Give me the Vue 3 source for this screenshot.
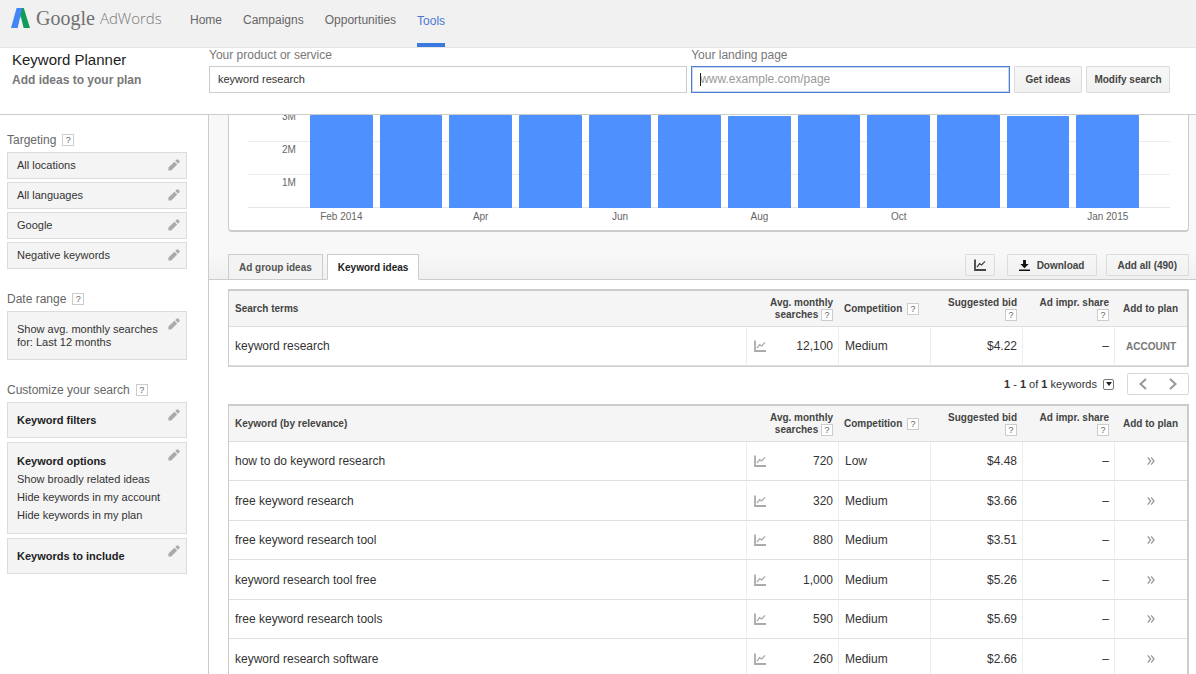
<script setup>
import { ref } from 'vue'

const nav = ['Home', 'Campaigns', 'Opportunities', 'Tools']
const product = ref('keyword research')
const landing = ref('')

const targeting = ['All locations', 'All languages', 'Google', 'Negative keywords']

const axis = ['3M', '2M', '1M']
const months = [
  { label: 'Feb 2014', value: 100 },
  { label: '', value: 100 },
  { label: 'Apr', value: 100 },
  { label: '', value: 100 },
  { label: 'Jun', value: 100 },
  { label: '', value: 100 },
  { label: 'Aug', value: 99 },
  { label: '', value: 100 },
  { label: 'Oct', value: 100 },
  { label: '', value: 100 },
  { label: '', value: 99 },
  { label: 'Jan 2015', value: 100 },
]

const tables = [
  {
    title: 'Search terms',
    rows: [{ term: 'keyword research', searches: '12,100', competition: 'Medium', bid: '$4.22', account: true }],
  },
  {
    title: 'Keyword (by relevance)',
    rows: [
      { term: 'how to do keyword research', searches: '720', competition: 'Low', bid: '$4.48' },
      { term: 'free keyword research', searches: '320', competition: 'Medium', bid: '$3.66' },
      { term: 'free keyword research tool', searches: '880', competition: 'Medium', bid: '$3.51' },
      { term: 'keyword research tool free', searches: '1,000', competition: 'Medium', bid: '$5.26' },
      { term: 'free keyword research tools', searches: '590', competition: 'Medium', bid: '$5.69' },
      { term: 'keyword research software', searches: '260', competition: 'Medium', bid: '$2.66' },
    ],
  },
]
</script>

<template>
  <div class="page">
    <svg class="defs" aria-hidden="true">
      <symbol id="pencil" viewBox="0 0 12 12">
        <path d="M0.4 11.6 V8.6 L6.4 2.8 L9.2 5.6 L3.2 11.6 Z M7.3 2 L8.8 0.6 Q9.5 0 10.2 0.6 L11.4 1.8 Q12 2.5 11.4 3.2 L10 4.7 Z" />
      </symbol>
      <symbol id="trend" viewBox="0 0 12 12">
        <path d="M1 0.5 V11 H12" fill="none" stroke="currentColor" stroke-width="1.8" />
        <path d="M3 8.2 L5.6 4.6 L7.6 6 L11 2.4" fill="none" stroke="currentColor" stroke-width="1.3" />
      </symbol>
    </svg>

    <header class="topbar">
      <a class="logo" href="#">
        <svg class="mark" viewBox="0 0 19 20">
          <path d="M7 0 H12.8 L19 20 H12.2 L8 6 Z" fill="#109d58" />
          <path d="M5.6 0 H11 L9.6 8 L6.8 20 H0 Z" fill="#4285f4" />
          <path d="M9.6 8 L12.6 20 H6.8 Z" fill="#f1f1f1" />
        </svg>
        <span class="brand">Google</span>
        <span class="product">AdWords</span>
      </a>
      <nav class="nav">
        <a v-for="n in nav" :key="n" href="#" :class="{ current: n === 'Tools' }">{{ n }}</a>
      </nav>
    </header>

    <section class="planner">
      <div class="titles">
        <h1>Keyword Planner</h1>
        <p>Add ideas to your plan</p>
      </div>
      <form class="search" @submit.prevent>
        <div class="field wide">
          <label for="product">Your product or service</label>
          <input id="product" v-model="product" type="text" />
        </div>
        <div class="field">
          <label for="landing">Your landing page</label>
          <div class="focusbox">
            <input id="landing" v-model="landing" class="focused" type="text" placeholder="www.example.com/page" />
            <span class="caret"></span>
          </div>
        </div>
        <button type="submit" class="btn tall">Get ideas</button>
        <button type="button" class="btn tall modify">Modify search</button>
      </form>
    </section>

    <div class="body">
      <aside class="side">
        <h2>Targeting <button type="button" class="help">?</button></h2>
        <button v-for="t in targeting" :key="t" type="button" class="card slim">
          <span>{{ t }}</span>
          <svg class="pencil"><use href="#pencil" /></svg>
        </button>

        <h2>Date range <button type="button" class="help">?</button></h2>
        <button type="button" class="card range">
          <span>Show avg. monthly searches for: Last 12 months</span>
          <svg class="pencil"><use href="#pencil" /></svg>
        </button>

        <h2>Customize your search <button type="button" class="help">?</button></h2>
        <button type="button" class="card">
          <strong>Keyword filters</strong>
          <svg class="pencil"><use href="#pencil" /></svg>
        </button>
        <button type="button" class="card">
          <span class="lines">
            <strong>Keyword options</strong>
            <span>Show broadly related ideas</span>
            <span>Hide keywords in my account</span>
            <span>Hide keywords in my plan</span>
          </span>
          <svg class="pencil"><use href="#pencil" /></svg>
        </button>
        <button type="button" class="card">
          <strong>Keywords to include</strong>
          <svg class="pencil"><use href="#pencil" /></svg>
        </button>
      </aside>

      <main class="main">
        <div class="upper">
          <div class="chart">
            <div class="plot">
              <div class="grid">
                <div v-for="a in axis" :key="a" class="band"><span>{{ a }}</span></div>
              </div>
              <div class="bars">
                <div v-for="(m, i) in months" :key="i" class="bar" :style="{ height: m.value + '%' }"></div>
              </div>
            </div>
            <div class="months">
              <span v-for="(m, i) in months" :key="i">{{ m.label }}</span>
            </div>
          </div>
          <div class="tools">
            <div class="tabs">
              <button type="button" class="tab">Ad group ideas</button>
              <button type="button" class="tab active">Keyword ideas</button>
            </div>
            <div class="actions">
              <button type="button" class="btn square" aria-label="Chart">
                <svg class="trend"><use href="#trend" /></svg>
              </button>
              <button type="button" class="btn download">
                <svg class="down" viewBox="0 0 10 10">
                  <path d="M3.7 0 H6.3 V3.6 H8.8 L5 7.6 L1.2 3.6 H3.7 Z M0 8.7 H10 V10 H0 Z" />
                </svg>
                Download
              </button>
              <button type="button" class="btn">Add all (490)</button>
            </div>
          </div>
        </div>

        <div class="results">
          <template v-for="(t, ti) in tables" :key="t.title">
            <table class="ideas">
              <colgroup>
                <col />
                <col class="c" />
                <col class="c" />
                <col class="c" />
                <col class="c" />
                <col class="last" />
              </colgroup>
              <thead>
                <tr>
                  <th class="term">{{ t.title }}</th>
                  <th class="num">Avg. monthly<br />searches <button type="button" class="help">?</button></th>
                  <th>Competition <button type="button" class="help gap">?</button></th>
                  <th class="num">Suggested bid<br /><button type="button" class="help">?</button></th>
                  <th class="num">Ad impr. share<br /><button type="button" class="help">?</button></th>
                  <th class="plan">Add to plan</th>
                </tr>
              </thead>
              <tbody>
                <tr v-for="r in t.rows" :key="r.term">
                  <td class="term">{{ r.term }}</td>
                  <td>
                    <div class="volume">
                      <svg class="trend"><use href="#trend" /></svg>
                      <span>{{ r.searches }}</span>
                    </div>
                  </td>
                  <td>{{ r.competition }}</td>
                  <td class="num">{{ r.bid }}</td>
                  <td class="num">–</td>
                  <td class="plan">
                    <span v-if="r.account" class="account">ACCOUNT</span>
                    <button v-else type="button" class="add" aria-label="Add to plan">
                      <svg viewBox="0 0 8 8">
                        <path d="M0.8 0.4 L3.6 4 L0.8 7.6 M4.2 0.4 L7 4 L4.2 7.6" />
                      </svg>
                    </button>
                  </td>
                </tr>
              </tbody>
            </table>
            <div v-if="ti === 0" class="pager">
              <span><b>1</b> - <b>1</b> of <b>1</b> keywords</span>
              <button type="button" class="drop" aria-label="Rows">
                <svg viewBox="0 0 6 4"><path d="M0 0 H6 L3 4 Z" /></svg>
              </button>
              <div class="arrows">
                <button type="button" aria-label="Previous">
                  <svg viewBox="0 0 8 12"><path d="M7 1 L1.5 6 L7 11" /></svg>
                </button>
                <button type="button" aria-label="Next">
                  <svg viewBox="0 0 8 12"><path d="M1 1 L6.5 6 L1 11" /></svg>
                </button>
              </div>
            </div>
          </template>
        </div>
      </main>
    </div>
  </div>
</template>

<style>
body {
  margin: 0;
}
</style>

<style scoped>
* {
  box-sizing: border-box;
}
.page {
  display: flex;
  flex-direction: column;
  height: 100vh;
  overflow: hidden;
  background: #fff;
  color: #333;
  font-family: "Liberation Sans", Arial, sans-serif;
  font-size: 12px;
}
button,
input {
  font-family: inherit;
  margin: 0;
}
button {
  cursor: pointer;
}
.defs {
  position: absolute;
  width: 0;
  height: 0;
}
.topbar {
  display: flex;
  flex: none;
  height: 48px;
  background: #f1f1f1;
  border-bottom: 1px solid #e5e5e5;
}
.logo {
  display: flex;
  flex: none;
  width: 190px;
  height: 36px;
  padding-left: 11px;
  align-items: center;
  color: #707070;
  text-decoration: none;
}
.mark {
  width: 19px;
  height: 20px;
  margin-right: 6px;
}
.brand {
  font-family: "Liberation Serif", serif;
  font-size: 20px;
  margin-right: 5px;
}
.product {
  font-family: "Open Sans", sans-serif;
  font-weight: 300;
  font-size: 15px;
  color: #777;
}
.nav {
  display: flex;
  gap: 21px;
}
.nav a {
  display: flex;
  align-items: center;
  height: 47px;
  padding-bottom: 7px;
  color: #666;
  text-decoration: none;
}
.nav a.current {
  color: #4a78d6;
  padding-bottom: 2px;
  border-bottom: 4px solid #3b78e0;
}
.planner {
  display: flex;
  flex: none;
  height: 67px;
  border-bottom: 1px solid #ccc;
}
.titles {
  flex: none;
  width: 209px;
  padding: 2px 0 0 12px;
}
.titles h1 {
  margin: 0;
  font-size: 15px;
  line-height: 20px;
  font-weight: 400;
  color: #222;
}
.titles p {
  margin: 0;
  line-height: 20px;
  font-weight: 700;
  color: #777;
}
.search {
  display: flex;
  flex: 1;
  align-items: flex-start;
  gap: 4px;
  padding-right: 26px;
}
.field {
  flex: 2;
}
.field.wide {
  flex: 3;
}
.field label {
  display: block;
  height: 18px;
  line-height: 14px;
  color: #777;
}
.field input {
  display: block;
  width: 100%;
  height: 27px;
  padding: 0 8px 2px;
  border: 1px solid #ccc;
  font-size: 11px;
  color: #333;
  background: #fff;
  outline: none;
}
.field input.focused {
  border: 1px solid #4d7fd0;
  box-shadow: inset 0 0 0 1px #c8d8f4;
  font-size: 12px;
}
.field input::placeholder {
  color: #999;
  opacity: 1;
}
.focusbox {
  position: relative;
}
.caret {
  position: absolute;
  left: 9px;
  top: 7px;
  width: 1px;
  height: 13px;
  background: #222;
}
.btn {
  display: flex;
  align-items: center;
  justify-content: center;
  height: 22px;
  padding: 0 11px;
  border: 1px solid #dcdcdc;
  border-radius: 1px;
  background: linear-gradient(#f7f7f7, #f1f1f1);
  color: #444;
  font-size: 10px;
  font-weight: 700;
}
.btn.tall {
  flex: none;
  width: 68px;
  height: 27px;
  margin-top: 18px;
  padding: 0;
}
.btn.modify {
  width: 84px;
}
.body {
  display: flex;
  flex: 1;
  min-height: 0;
}
.side {
  flex: none;
  width: 209px;
  padding: 17px 21px 0 7px;
  border-right: 1px solid #ccc;
}
.side h2 {
  display: flex;
  align-items: center;
  margin: 0 0 5px;
  height: 15px;
  gap: 6px;
  font-size: 12px;
  font-weight: 400;
  color: #666;
}
.card + h2 {
  margin-top: 22px;
}
.help {
  display: inline-block;
  width: 12px;
  height: 12px;
  padding: 0;
  border: 1px solid #ccc;
  background: #fff;
  color: #666;
  font-size: 9px;
  line-height: 10px;
  font-weight: 400;
  text-align: center;
  vertical-align: top;
}
.card {
  display: flex;
  justify-content: space-between;
  align-items: flex-start;
  width: 100%;
  margin-bottom: 4px;
  padding: 6px 6px 8px 9px;
  border: 1px solid #dcdcdc;
  background: #f4f4f4;
  color: #333;
  font-size: 11px;
  line-height: 18px;
  text-align: left;
}
.card > strong {
  margin-top: 2px;
}
.card.slim {
  height: 27px;
  margin-bottom: 3px;
  padding-top: 3px;
  padding-bottom: 3px;
}
.card.range {
  height: 49px;
  line-height: 13px;
}
.range > span {
  margin-top: 5px;
}
.card strong {
  color: #222;
}
.lines {
  display: flex;
  flex-direction: column;
  padding: 3px 0 1px;
}
.pencil {
  flex: none;
  width: 12px;
  height: 12px;
  fill: #aaa;
}
.slim .pencil {
  margin-top: 3px;
}
.main {
  display: flex;
  flex: 1;
  flex-direction: column;
  min-width: 0;
}
.upper {
  flex: none;
  padding: 0 7px 0 19px;
  background: linear-gradient(#f8f8f8 85%, #f0f0f0);
  border-bottom: 1px solid #ccc;
}
.chart {
  padding: 0 18px 8px 19px;
  background: #fff;
  border: 1px solid #ccc;
  border-top: 0;
  border-bottom-width: 2px;
  border-radius: 0 0 4px 4px;
}
.plot {
  display: grid;
  height: 93px;
  overflow: hidden;
}
.grid,
.bars {
  grid-area: 1 / 1;
  min-height: 0;
}
.grid {
  display: flex;
  flex-direction: column;
  justify-content: flex-end;
  border-bottom: 1px solid #e6e6e6;
}
.band {
  flex: none;
  height: 33px;
  padding-left: 34px;
  border-top: 1px solid #ebebeb;
  font-size: 10px;
  line-height: 15px;
  color: #666;
}
.bars {
  display: flex;
  align-items: flex-end;
  gap: 7px;
  padding: 0 31px 0 62px;
}
.bar {
  flex: 1;
  background: #4d90fe;
  border-radius: 1px 1px 0 0;
}
.months {
  display: flex;
  gap: 7px;
  height: 14px;
  padding: 0 31px 0 62px;
  font-size: 10px;
  line-height: 18px;
  color: #666;
}
.months span {
  flex: 1;
  text-align: center;
  white-space: nowrap;
}
.tools {
  display: flex;
  justify-content: space-between;
  align-items: flex-end;
  margin: 22px 0 -1px;
}
.tabs {
  display: flex;
  gap: 4px;
}
.tab {
  height: 26px;
  padding: 0 10px;
  border: 1px solid #ccc;
  background: #f3f3f3;
  color: #555;
  font-size: 10px;
  font-weight: 700;
}
.tab.active {
  background: #fff;
  border-bottom-color: #fff;
  color: #222;
}
.actions {
  display: flex;
  gap: 9px;
  margin-bottom: 4px;
}
.square {
  width: 30px;
  margin-right: 3px;
  padding: 0;
  color: #444;
}
.download {
  width: 90px;
  gap: 7px;
  padding: 0;
}
.down {
  width: 11px;
  height: 11px;
  fill: #111;
}
.trend {
  flex: none;
  width: 12px;
  height: 12px;
}
.results {
  padding: 9px 7px 0 19px;
}
.ideas {
  width: 100%;
  table-layout: fixed;
  border-collapse: separate;
  border-spacing: 0;
  border: 1px solid #ccc;
  border-top-width: 2px;
  border-right-width: 2px;
}
.c {
  width: 92px;
}
.last {
  width: 73px;
}
.ideas th {
  height: 36px;
  padding: 0 5px 0 6px;
  background: #f5f5f5;
  border-bottom: 1px solid #ddd;
  font-size: 10px;
  line-height: 12px;
  color: #444;
  text-align: left;
}
.ideas td {
  height: 39px;
  padding: 0 5px 0 6px;
  border-bottom: 1px solid #e0e0e0;
  border-left: 1px solid #eee;
  color: #333;
}
.ideas tr:nth-child(even) td {
  height: 40px;
}
.ideas td.term {
  border-left: 0;
}
.ideas .num {
  text-align: right;
}
.ideas .plan {
  padding: 0;
  text-align: center;
}
.gap {
  margin-left: 2px;
}
.volume {
  display: flex;
  justify-content: space-between;
  align-items: center;
}
.volume .trend {
  color: #aaa;
  margin-left: 1px;
}
.account {
  font-size: 10px;
  font-weight: 700;
  color: #777;
}
.add {
  width: 16px;
  height: 16px;
  padding: 4px;
  border: 0;
  background: none;
}
.add svg {
  display: block;
  width: 8px;
  height: 8px;
  fill: none;
  stroke: #999;
  stroke-width: 1.3;
}
.pager {
  display: flex;
  align-items: center;
  justify-content: flex-end;
  height: 22px;
  margin: 6px 0 9px;
  font-size: 11px;
}
.drop {
  display: flex;
  align-items: center;
  justify-content: center;
  width: 11px;
  height: 11px;
  margin: 0 13px 0 6px;
  padding: 0;
  border: 1px solid #777;
  border-radius: 2px;
  background: #fff;
}
.drop svg {
  width: 6px;
  height: 4px;
  fill: #222;
}
.arrows {
  display: flex;
  width: 62px;
  height: 22px;
  border: 1px solid #d8d8d8;
  border-radius: 2px;
}
.arrows button {
  display: flex;
  flex: 1;
  align-items: center;
  justify-content: center;
  padding: 0;
  border: 0;
  background: none;
}
.arrows svg {
  width: 8px;
  height: 12px;
  fill: none;
  stroke: #999;
  stroke-width: 2;
}
</style>
